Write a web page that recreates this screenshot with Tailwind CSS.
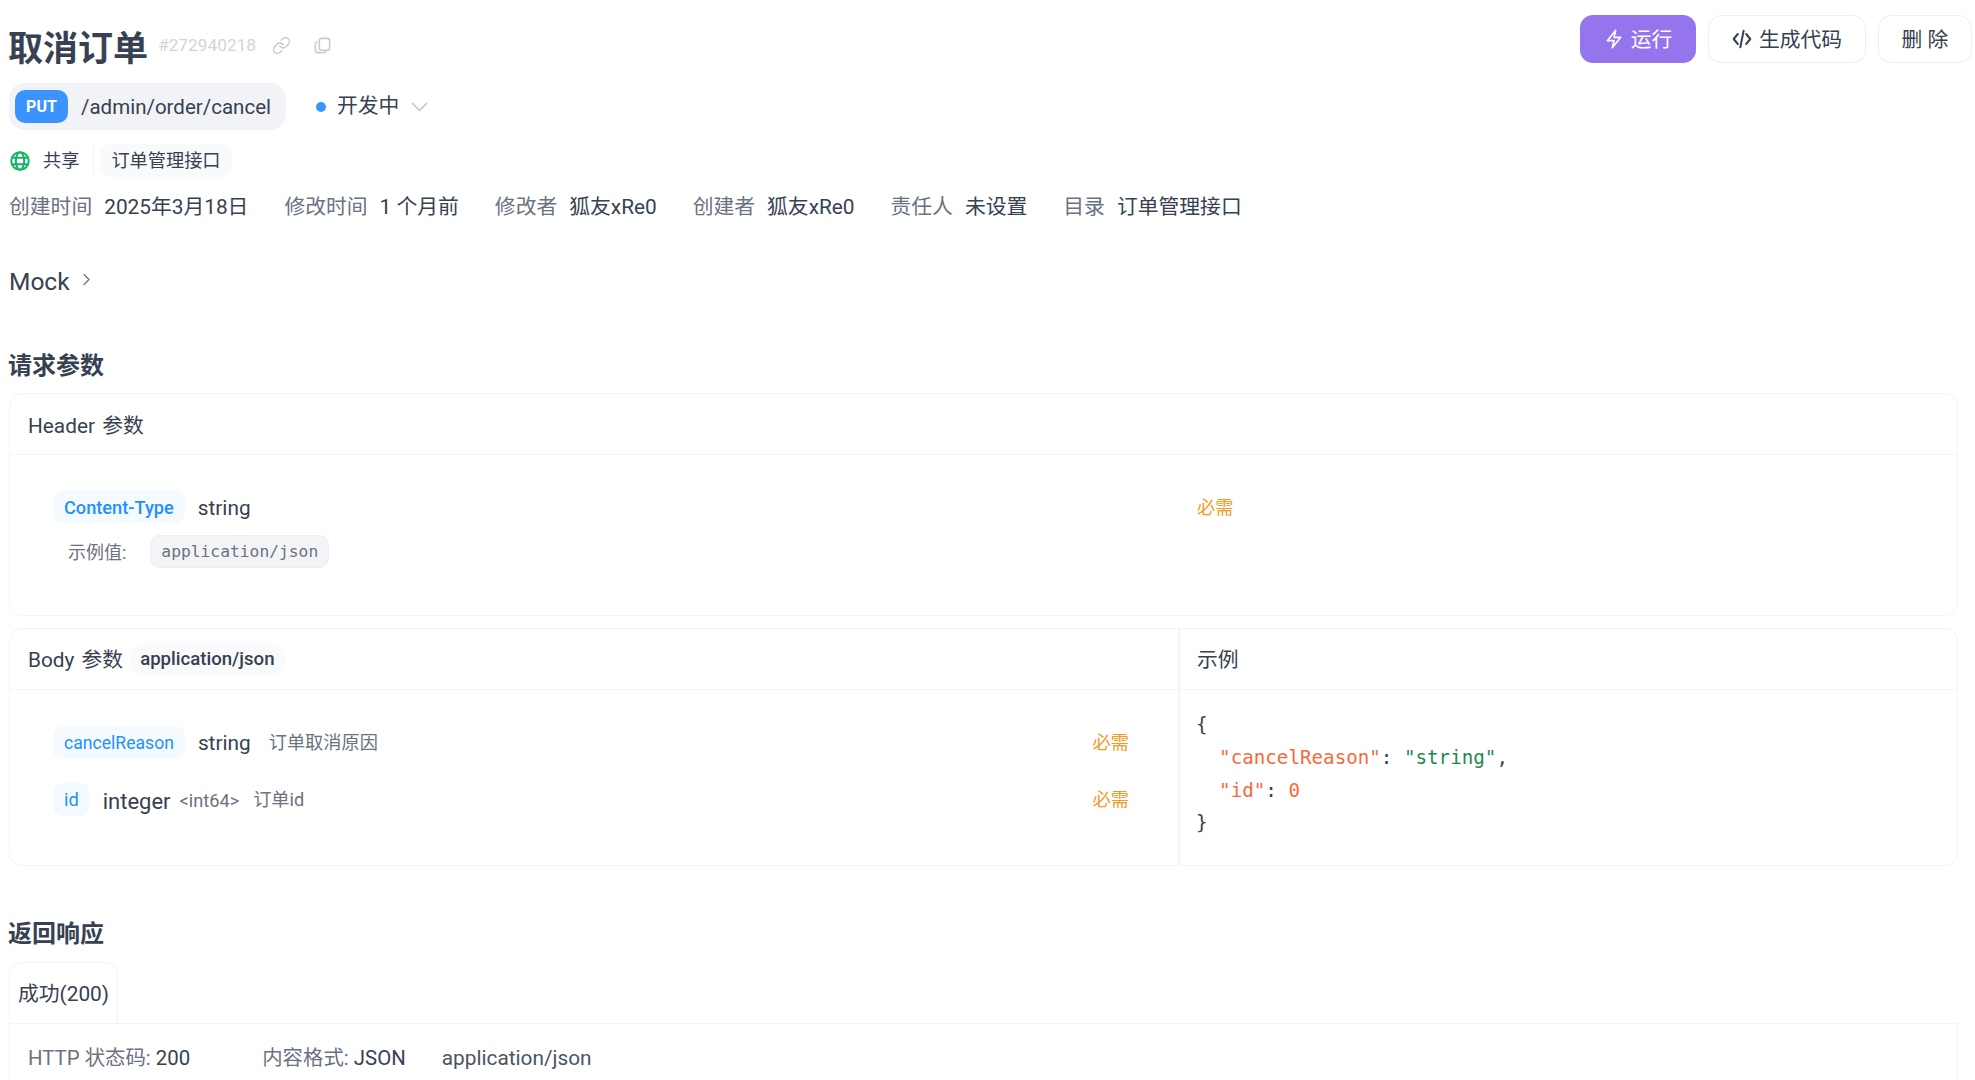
<!DOCTYPE html>
<html lang="zh-CN">
<head>
    <meta charset="UTF-8">
    <title>取消订单</title>
    <script src="https://cdn.jsdelivr.net/npm/@tailwindcss/browser@4"></script>
</head>
<body class="bg-white h-[1080px] overflow-hidden text-[#374151] font-['Roboto','Noto_Sans_CJK_SC',sans-serif] text-[20.8px]">
    <div class="pl-[9px] pr-[3px]">
        <!-- top: title block and actions -->
        <div class="flex justify-between items-start">
            <div class="pt-[18px]">
                <div class="flex items-center h-[60px]">
                    <h1 class="-ml-px pt-[2px] text-[35px] font-bold leading-none">取消订单</h1>
                    <span class="ml-[10px] mb-[5px] text-[17.3px] text-[#d1d5db]">#272940218</span>
                    <svg class="ml-[16px] mb-[5px] w-[19px] h-[19px] text-[#c9ccd2]" viewBox="0 0 24 24" fill="none" stroke="currentColor" stroke-width="2" stroke-linecap="round" stroke-linejoin="round"><path d="M10 13a5 5 0 0 0 7.54.54l3-3a5 5 0 0 0-7.07-7.07l-1.72 1.71"/><path d="M14 11a5 5 0 0 0-7.54-.54l-3 3a5 5 0 0 0 7.07 7.07l1.71-1.71"/></svg>
                    <svg class="ml-[22px] mb-[5px] w-[19px] h-[19px] text-[#c9ccd2]" viewBox="0 0 24 24" fill="none" stroke="currentColor" stroke-width="2" stroke-linecap="round" stroke-linejoin="round"><rect x="8" y="3" width="13" height="15" rx="3"/><path d="M5 7.5A3 3 0 0 0 3 10v8a3 3 0 0 0 3 3h8a3 3 0 0 0 2.5-1.5"/></svg>
                </div>
                <div class="flex items-center mt-[5px] h-[47px]">
                    <div class="flex items-center h-full w-[277px] pl-[6px] rounded-[16px] bg-[#f2f3f7]">
                        <span class="flex items-center justify-center w-[53px] h-[33px] rounded-[10px] bg-[#3b93ff] text-white text-[16px] font-bold">PUT</span>
                        <span class="ml-[13px] pt-[2px] text-[20.5px]">/admin/order/cancel</span>
                    </div>
                    <span class="ml-[30px] w-[10px] h-[10px] rounded-full bg-[#3b93ff]"></span>
                    <span class="ml-[11px]">开发中</span>
                    <svg class="ml-[11px] w-[19px] h-[19px] text-[#c4c7cd]" viewBox="0 0 24 24" fill="none" stroke="currentColor" stroke-width="2" stroke-linecap="round" stroke-linejoin="round"><path d="m3 8 9 9 9-9"/></svg>
                </div>
                <div class="flex items-center mt-[14px] h-[33px] text-[18.2px]">
                    <svg class="ml-[1px] w-[20px] h-[20px] text-[#16b364]" viewBox="0 0 24 24" fill="none" stroke="currentColor" stroke-width="2.4"><circle cx="12" cy="12" r="10.5"/><ellipse cx="12" cy="12" rx="5" ry="10.5"/><path d="M3 8h18M3 16h18"/></svg>
                    <span class="ml-[13px]">共享</span>
                    <span class="ml-[14px] w-px h-[28px] bg-[#f3f4f6]"></span>
                    <span class="ml-[6px] flex items-center h-full px-[11px] rounded-[10px] bg-[#f9fafb]">订单管理接口</span>
                </div>
            </div>
            <div class="flex gap-[12px] pt-[15px]">
                <button class="flex items-center justify-center gap-[7px] w-[116px] h-[48px] rounded-[13px] bg-[#9575ed] text-white">
                    <svg class="w-[20px] h-[20px]" viewBox="0 0 24 24" fill="none" stroke="currentColor" stroke-width="2" stroke-linecap="round" stroke-linejoin="round"><path d="M14 1.5 4 14h8l-2 8.5L20 10h-8z"/></svg>
                    <span class="pt-[3px]">运行</span>
                </button>
                <button class="flex items-center justify-center gap-[7px] w-[158px] h-[48px] rounded-[13px] border border-[#eceef1]">
                    <svg class="w-[20px] h-[20px]" viewBox="0 0 24 24" fill="none" stroke="currentColor" stroke-width="2.4" stroke-linecap="round" stroke-linejoin="round"><path d="m7 6-5 6 5 6M17 6l5 6-5 6M14 2l-4 20"/></svg>
                    <span class="pt-[3px]">生成代码</span>
                </button>
                <button class="w-[94px] h-[48px] pt-[3px] rounded-[13px] border border-[#eceef1]">删 除</button>
            </div>
        </div>

        <!-- meta -->
        <div class="flex items-center mt-[15px] pt-[2px] h-[30px] gap-[36px]">
            <div class="flex gap-[12px]"><span class="text-[#6b7280]">创建时间</span><span>2025年3月18日</span></div>
            <div class="flex gap-[12px]"><span class="text-[#6b7280]">修改时间</span><span>1 个月前</span></div>
            <div class="flex gap-[12px]"><span class="text-[#6b7280]">修改者</span><span>狐友xRe0</span></div>
            <div class="flex gap-[12px]"><span class="text-[#6b7280]">创建者</span><span>狐友xRe0</span></div>
            <div class="flex gap-[12px]"><span class="text-[#6b7280]">责任人</span><span>未设置</span></div>
            <div class="flex gap-[12px]"><span class="text-[#6b7280]">目录</span><span>订单管理接口</span></div>
        </div>

        <!-- mock -->
        <div class="flex items-center mt-[39px] h-[40px]">
            <span class="pt-[2px] text-[24.5px]">Mock</span>
            <svg class="ml-[9px] mb-[3px] w-[15px] h-[15px] text-[#6b7280]" viewBox="0 0 24 24" fill="none" stroke="currentColor" stroke-width="2" stroke-linecap="round" stroke-linejoin="round"><path d="m8 4 8 8-8 8"/></svg>
        </div>

        <!-- request params -->
        <h2 class="-ml-px mt-[47px] h-[34px] pt-[2px] flex items-center text-[24px] font-bold">请求参数</h2>
        <div class="w-[1949px] mt-[11px] h-[223px] rounded-[13px] border border-[#f3f4f6]">
            <div class="flex items-center h-[61px] pt-[5px] pl-[18px] border-b border-[#f3f4f6] [word-spacing:2px]">Header 参数</div>
            <div class="pl-[43px] pt-[35px]">
                <div class="flex items-center relative h-[33px]">
                    <span class="flex items-center h-[33px] pt-[2px] px-[11px] rounded-[10px] bg-[#f5faff] text-[#1e90ff] text-[18.2px] font-medium">Content-Type</span>
                    <span class="ml-[13px] pt-[5px]">string</span>
                    <span class="absolute left-[1144px] pt-[3px] text-[18.2px] text-[#f59a23]">必需</span>
                </div>
                <div class="flex items-center mt-[12px] pl-[15px]">
                    <span class="pt-[1px] text-[18px] text-[#6b7280]">示例值:</span>
                    <span class="ml-[24px] flex items-center h-[33px] pt-[2px] px-[10px] rounded-[10px] border border-[#eceef1] bg-[#f3f4f7] text-[#6b7280] font-['DejaVu_Sans_Mono',monospace] text-[16.3px]">application/json</span>
                </div>
            </div>
        </div>

        <div class="w-[1949px] mt-[12px] h-[238px] rounded-[13px] border border-[#f3f4f6] grid grid-cols-[1170px_1fr]">
            <div class="border-r-2 border-[#f3f4f6]">
                <div class="flex items-center h-[61px] pl-[18px] border-b border-[#f3f4f6]">
                    <span class="pt-[3px] [word-spacing:2px]">Body 参数</span>
                    <span class="ml-[6px] pt-[2px] flex items-center h-[33px] px-[11px] rounded-full bg-[#f9fafb] text-[18.6px] font-medium">application/json</span>
                </div>
                <div class="pl-[43px] pt-[36px] pr-[49px]">
                    <div class="flex items-center h-[33px]">
                        <span class="flex items-center h-[33px] pt-[1px] px-[11px] rounded-[10px] bg-[#f5faff] text-[#1e90ff] text-[17.6px]">cancelReason</span>
                        <span class="ml-[13px] pt-[3px]">string</span>
                        <span class="ml-[18px] pt-[1px] text-[18.2px] text-[#6b7280]">订单取消原因</span>
                        <span class="ml-auto pt-[1px] text-[18.2px] text-[#f59a23]">必需</span>
                    </div>
                    <div class="flex items-center h-[33px] mt-[24px]">
                        <span class="flex items-center h-[33px] px-[11px] rounded-[10px] bg-[#f5faff] text-[#1e90ff] text-[18.2px]">id</span>
                        <span class="ml-[13px] pt-[3px] text-[22px]">integer</span>
                        <span class="ml-[9px] pt-[3px] text-[18.2px] text-[#6b7280]">&lt;int64&gt;</span>
                        <span class="ml-[14px] text-[18.2px] text-[#6b7280]">订单id</span>
                        <span class="ml-auto pt-[1px] text-[18.2px] text-[#f59a23]">必需</span>
                    </div>
                </div>
            </div>
            <div>
                <div class="flex items-center h-[61px] pt-[3px] pl-[17px] border-b border-[#f3f4f6]">示例</div>
                <div class="pl-[16px] pt-[19px] font-['DejaVu_Sans_Mono',monospace] text-[19.2px] leading-[32.8px]">
                    <div>{</div>
                    <div class="whitespace-pre">  <span class="text-[#f56a3c]">"cancelReason"</span>: <span class="text-[#1f8a4c]">"string"</span>,</div>
                    <div class="whitespace-pre">  <span class="text-[#f56a3c]">"id"</span>: <span class="text-[#f56a3c]">0</span></div>
                    <div>}</div>
                </div>
            </div>
        </div>

        <!-- responses -->
        <h2 class="-ml-px mt-[51px] h-[34px] flex items-center text-[24px] font-bold">返回响应</h2>
        <div class="mt-[11px] pt-[2px] flex items-center justify-center w-[109px] h-[62px] rounded-t-[13px] border border-b-0 border-[#f3f4f6]">成功(200)</div>
        <div class="w-[1949px] -mt-px h-[60px] border border-b-0 border-[#f3f4f6] flex items-center pl-[18px] pt-[10px]">
            <span class="text-[20.4px] text-[#6b7280]">HTTP 状态码: <span class="text-[#374151]">200</span></span>
            <span class="ml-[72px] text-[20.4px] text-[#6b7280]">内容格式: <span class="text-[#374151]">JSON</span></span>
            <span class="ml-[36px] text-[#4b5563]">application/json</span>
        </div>
    </div>
</body>
</html>
